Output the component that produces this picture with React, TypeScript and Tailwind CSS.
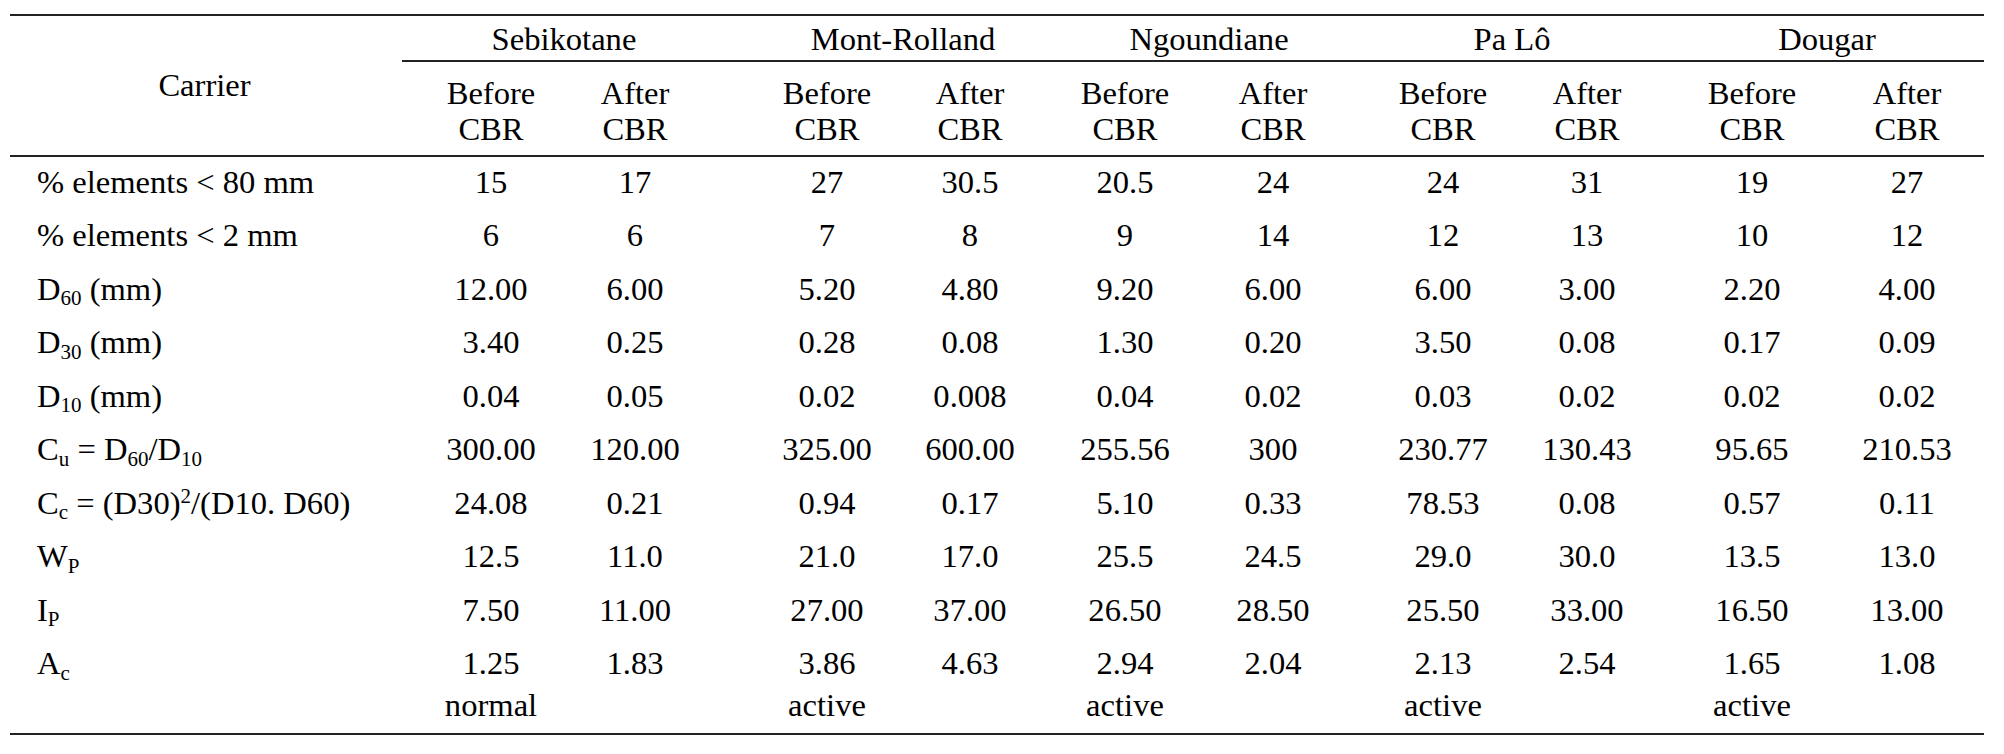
import React from "react";

const S = "text-[21px]";

const rows: { label: React.ReactNode; values: string[] }[] = [
  { label: "% elements < 80 mm", values: ["15", "17", "27", "30.5", "20.5", "24", "24", "31", "19", "27"] },
  { label: "% elements < 2 mm", values: ["6", "6", "7", "8", "9", "14", "12", "13", "10", "12"] },
  {
    label: (
      <>
        D<sub className={S}>60</sub> (mm)
      </>
    ),
    values: ["12.00", "6.00", "5.20", "4.80", "9.20", "6.00", "6.00", "3.00", "2.20", "4.00"],
  },
  {
    label: (
      <>
        D<sub className={S}>30</sub> (mm)
      </>
    ),
    values: ["3.40", "0.25", "0.28", "0.08", "1.30", "0.20", "3.50", "0.08", "0.17", "0.09"],
  },
  {
    label: (
      <>
        D<sub className={S}>10</sub> (mm)
      </>
    ),
    values: ["0.04", "0.05", "0.02", "0.008", "0.04", "0.02", "0.03", "0.02", "0.02", "0.02"],
  },
  {
    label: (
      <>
        C<sub className={S}>u</sub> = D<sub className={S}>60</sub>/D<sub className={S}>10</sub>
      </>
    ),
    values: ["300.00", "120.00", "325.00", "600.00", "255.56", "300", "230.77", "130.43", "95.65", "210.53"],
  },
  {
    label: (
      <>
        C<sub className={S}>c</sub> = (D30)<sup className={S}>2</sup>/(D10. D60)
      </>
    ),
    values: ["24.08", "0.21", "0.94", "0.17", "5.10", "0.33", "78.53", "0.08", "0.57", "0.11"],
  },
  {
    label: (
      <>
        W<sub className={S}>P</sub>
      </>
    ),
    values: ["12.5", "11.0", "21.0", "17.0", "25.5", "24.5", "29.0", "30.0", "13.5", "13.0"],
  },
  {
    label: (
      <>
        I<sub className={S}>P</sub>
      </>
    ),
    values: ["7.50", "11.00", "27.00", "37.00", "26.50", "28.50", "25.50", "33.00", "16.50", "13.00"],
  },
  {
    label: (
      <>
        A<sub className={S}>c</sub>
      </>
    ),
    values: ["1.25", "1.83", "3.86", "4.63", "2.94", "2.04", "2.13", "2.54", "1.65", "1.08"],
  },
];

const groups: { name: string; cls: string }[] = [
  { name: "Sebikotane", cls: "pr-[22px]" },
  { name: "Mont-Rolland", cls: "pl-[27px]" },
  { name: "Ngoundiane", cls: "pl-[12px]" },
  { name: "Pa Lô", cls: "pr-[4px]" },
  { name: "Dougar", cls: "" },
];

// per-column horizontal nudge so each column's centre sits where the reference has it
const colPad = [
  "",
  "pr-[24px]",
  "pl-[25px]",
  "pr-[6px]",
  "pl-[3px]",
  "pr-[11px]",
  "pl-[13px]",
  "pr-[11px]",
  "pl-[4px]",
  "",
];

const lastRow = ["normal", "", "active", "", "active", "", "active", "", "active", ""];

const gridCols =
  "grid grid-cols-[409px_144px_168px_167px_150px_151px_159px_157px_155px_160px_154px]";

export default function App() {
  return (
    <div className="w-[2004px] h-[754px] bg-white pl-[10px] pt-[14px] [font-family:'Liberation_Serif','Times_New_Roman',serif] text-[32.6px] text-black">
      <div className="w-[1974px] border-t-2 border-b-2 border-[#222]">
        {/* header */}
        <div className={`${gridCols} grid-rows-[44px_2px_93px] border-b-2 border-[#222]`}>
          <div className="row-span-3 flex items-center justify-center pr-[20px] leading-none">Carrier</div>
          {groups.map((g) => (
            <div key={g.name} className={`col-span-2 flex items-center justify-center leading-none pt-[2px] ${g.cls}`}>
              {g.name}
            </div>
          ))}
          <div className="col-span-10 -ml-[17px] bg-[#222]" />
          {groups.map((g, gi) => (
            <React.Fragment key={g.name + "-sub"}>
              <div className={`flex flex-col items-center justify-center leading-[36px] pt-[4px] ${colPad[gi * 2]}`}>
                <span>Before</span>
                <span>CBR</span>
              </div>
              <div className={`flex flex-col items-center justify-center leading-[36px] pt-[4px] ${colPad[gi * 2 + 1]}`}>
                <span>After</span>
                <span>CBR</span>
              </div>
            </React.Fragment>
          ))}
        </div>
        {/* body */}
        {rows.map((r, i) => (
          <div key={i} className={`${gridCols} h-[53.5px] items-center leading-none pb-[3px]`}>
            <div className="pl-[27px] whitespace-nowrap">{r.label}</div>
            {r.values.map((v, j) => (
              <div key={j} className={`text-center ${colPad[j]}`}>
                {v}
              </div>
            ))}
          </div>
        ))}
        <div className={`${gridCols} h-[41px] items-start leading-none`}>
          <div />
          {lastRow.map((v, j) => (
            <div key={j} className={`text-center -mt-[3px] ${colPad[j]}`}>
              {v}
            </div>
          ))}
        </div>
      </div>
    </div>
  );
}
